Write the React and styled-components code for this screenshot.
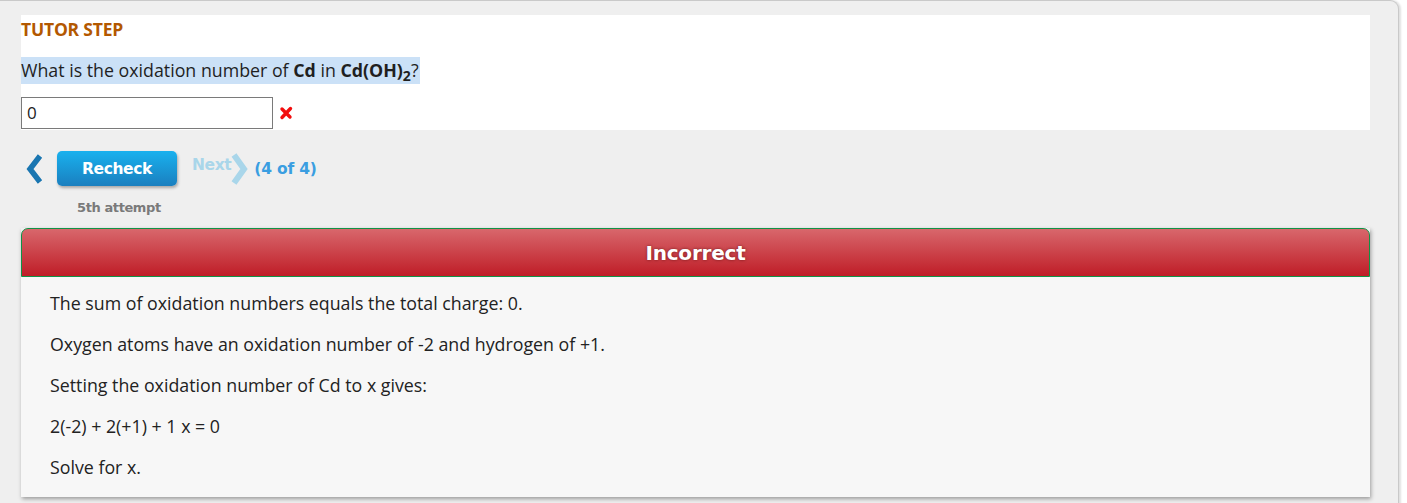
import styled, { createGlobalStyle } from 'styled-components';

const Global = createGlobalStyle`
  body {
    margin: 0;
    background: #fff;
    font-family: 'Open Sans', 'Liberation Sans', sans-serif;
  }
`;

const Frame = styled.div`
  width: 1377px;
  height: 502px;
  background: #efefef;
  border-top: 1px solid #c9c9c9;
  border-right: 1px solid #c9c9c9;
  border-top-right-radius: 9px;
  box-shadow: 2px 0 2px rgba(0, 0, 0, 0.12);
  padding: 14px 0 0 21px;
  overflow: hidden;
`;

const StepPanel = styled.div`
  width: 1349px;
  height: 115px;
  background: #fff;
  display: flex;
  flex-direction: column;
`;

const StepTitle = styled.div`
  margin-top: 3px;
  font-weight: 700;
  font-size: 17.5px;
  line-height: 22px;
  color: #b35800;
  letter-spacing: -0.2px;
`;

const Question = styled.div`
  margin-top: 17px;
  align-self: flex-start;
  background: #cbe1f7;
  font-size: 17.8px;
  line-height: 27px;
  height: 27px;
  color: #1f1f1f;
  padding-right: 1px;

  b {
    font-weight: 700;
  }
  sub {
    font-size: 14px;
    font-weight: 700;
    vertical-align: -4px;
    line-height: 0;
  }
`;

const AnswerRow = styled.div`
  margin-top: 13px;
  display: flex;
  align-items: center;
  gap: 6px;
`;

const AnswerBox = styled.div`
  width: 252px;
  height: 32px;
  border: 1px solid #7a7a7a;
  font-size: 17px;
  line-height: 30px;
  padding-left: 5px;
  box-sizing: border-box;
  color: #222;
`;

const NavArea = styled.div`
  display: flex;
  flex-direction: column;
  margin-top: 21px;
`;

const NavRow = styled.div`
  display: flex;
  align-items: center;
  height: 35px;
  font-family: 'DejaVu Sans', Verdana, sans-serif;
  font-weight: 700;
`;

const Chevron = styled.svg`
  display: block;
  margin-left: ${(p) => p.$offset || 0}px;
`;

const RecheckButton = styled.button`
  width: 120px;
  height: 35px;
  margin-left: 11px;
  border: none;
  border-radius: 5px;
  background: linear-gradient(#19b1ee, #1a7fbf);
  box-shadow: 1px 2px 3px rgba(0, 0, 0, 0.3);
  color: #fff;
  font-family: 'DejaVu Sans', Verdana, sans-serif;
  font-weight: 700;
  font-size: 15.5px;
  letter-spacing: -0.4px;
  padding: 0;
`;

const NextLink = styled.span`
  margin-left: 15px;
  color: #a9d6ea;
  font-size: 15.5px;
  letter-spacing: -0.4px;
  position: relative;
  top: -4px;
`;

const Count = styled.span`
  margin-left: 5px;
  color: #3a9ee1;
  font-size: 15.5px;
  letter-spacing: -0.2px;
`;

const Attempt = styled.div`
  margin-left: 56px;
  margin-top: 14px;
  font-family: 'DejaVu Sans', Verdana, sans-serif;
  font-weight: 700;
  font-size: 13px;
  letter-spacing: -0.4px;
  color: #7a7a7a;
`;

const Feedback = styled.div`
  margin-top: 13px;
  width: 1349px;
  box-shadow: 1px 2px 4px rgba(0, 0, 0, 0.35);
`;

const FeedbackHeader = styled.div`
  height: 47px;
  border: 1px solid #119246;
  border-top-left-radius: 7px;
  border-top-right-radius: 7px;
  background: linear-gradient(#d8676c, #bf1d27);
  display: flex;
  align-items: center;
  justify-content: center;
  color: #fff;
  font-family: 'DejaVu Sans', Verdana, sans-serif;
  font-weight: 700;
  font-size: 20px;
  letter-spacing: -0.2px;
  text-shadow: 0 0 3px rgba(60, 0, 0, 0.6);
`;

const FeedbackBody = styled.div`
  background: #f7f7f7;
  padding: 13px 29px 15px;
  display: flex;
  flex-direction: column;
  gap: 14px;
  height: 220px;
  box-sizing: border-box;
`;

const Line = styled.div`
  font-size: 17.8px;
  line-height: 27px;
  color: #222;
`;

const lines = [
  'The sum of oxidation numbers equals the total charge: 0.',
  'Oxygen atoms have an oxidation number of -2 and hydrogen of +1.',
  'Setting the oxidation number of Cd to x gives:',
  '2(-2) + 2(+1) + 1 x = 0',
  'Solve for x.',
];

function WrongMark() {
  return (
    <svg width="14" height="14" viewBox="0 0 14 14">
      <path d="M3 3 L11 11 M11.5 2.5 L3 11.5" stroke="#f20d0d" strokeWidth="3.4" strokeLinecap="round" fill="none" />
    </svg>
  );
}

export default function App() {
  return (
    <>
      <Global />
      <Frame>
        <StepPanel>
          <StepTitle>TUTOR STEP</StepTitle>
          <Question>
            What is the oxidation number of <b>Cd</b> in <b>Cd(OH)</b>
            <sub>2</sub>?
          </Question>
          <AnswerRow>
            <AnswerBox>0</AnswerBox>
            <WrongMark />
          </AnswerRow>
        </StepPanel>

        <NavArea>
          <NavRow>
            <Chevron width="22" height="30" viewBox="0 0 22 30" $offset={3}>
              <path d="M16 2 L6 15 L16 28" stroke="#1a76b1" strokeWidth="5.5" fill="none" />
            </Chevron>
            <RecheckButton>Recheck</RecheckButton>
            <NextLink>Next</NextLink>
            <Chevron width="18" height="32" viewBox="0 0 18 32">
              <path d="M3 2 L13 16 L3 30" stroke="#a9d6ea" strokeWidth="6" fill="none" />
            </Chevron>
            <Count>(4 of 4)</Count>
          </NavRow>
          <Attempt>5th attempt</Attempt>
        </NavArea>

        <Feedback>
          <FeedbackHeader>Incorrect</FeedbackHeader>
          <FeedbackBody>
            {lines.map((l) => (
              <Line key={l}>{l}</Line>
            ))}
          </FeedbackBody>
        </Feedback>
      </Frame>
    </>
  );
}
